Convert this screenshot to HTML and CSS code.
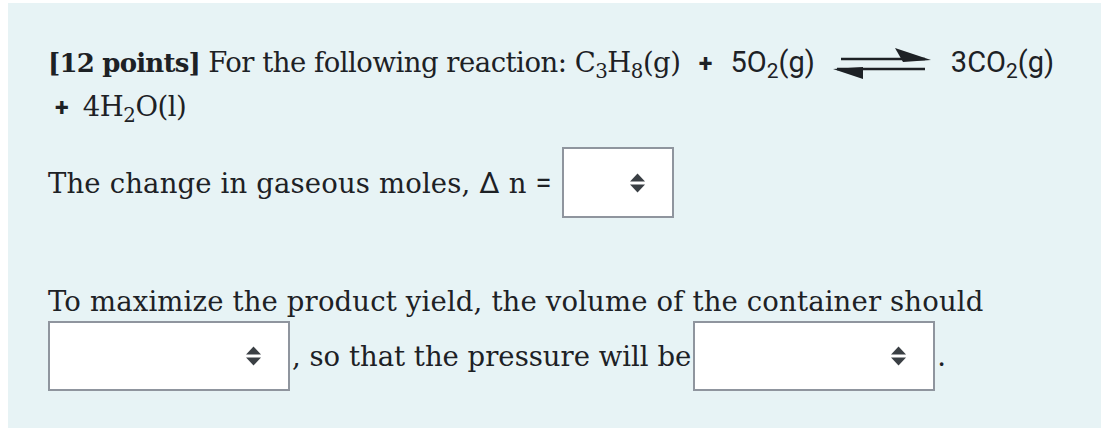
FILE: index.html
```html
<!DOCTYPE html>
<html>
<head>
<meta charset="utf-8">
<link rel="stylesheet" href="styles.css">
</head>
<body>
<div class="que">
  <p class="reaction"><b>[12 points]</b> For the following reaction: C<sub>3</sub>H<sub>8</sub>(g) <span class="plus">+</span> <span class="sans">5O<sub>2</sub>(g)</span><svg class="eq" width="100" height="36" viewBox="0 0 100 36"><line x1="8" y1="14" x2="92" y2="14" stroke="#1d2125" stroke-width="2.4"/><polygon points="62,3 98,15 70,17" fill="#1d2125"/><line x1="4" y1="24" x2="92" y2="24" stroke="#1d2125" stroke-width="2.4"/><polygon points="0,24 30,22 30,34" fill="#1d2125"/></svg><span class="sans">3CO<sub>2</sub>(g)</span><br><span class="lead"><span class="plus">+</span></span> 4H<sub>2</sub>O(l)</p>

  <div class="row row-dn">
    <span class="txt">The change in gaseous moles, <span class="sans">Δ</span> n <span class="sans">=</span></span>
    <span class="select sm"><svg class="updown" width="15" height="20" viewBox="0 0 15 20"><polygon points="0,8.5 7.5,0.5 15,8.5" fill="#3a3f44"/><polygon points="0,11.5 7.5,19.5 15,11.5" fill="#3a3f44"/></svg></span>
  </div>

  <p class="txt yield">To maximize the product yield, the volume of the container should</p>
  <div class="row row-vol">
    <span class="select lg"><svg class="updown" width="15" height="20" viewBox="0 0 15 20"><polygon points="0,8.5 7.5,0.5 15,8.5" fill="#3a3f44"/><polygon points="0,11.5 7.5,19.5 15,11.5" fill="#3a3f44"/></svg></span>
    <span class="txt mid">, so that the pressure will be</span>
    <span class="select lg"><svg class="updown" width="15" height="20" viewBox="0 0 15 20"><polygon points="0,8.5 7.5,0.5 15,8.5" fill="#3a3f44"/><polygon points="0,11.5 7.5,19.5 15,11.5" fill="#3a3f44"/></svg></span>
    <span class="txt end">.</span>
  </div>
</div>
</body>
</html>
```

FILE: styles.css
```css
html, body {
  margin: 0;
  padding: 0;
  background: #ffffff;
}

.que {
  margin: 3px 0 0 8px;
  width: 1093px;
  height: 425px;
  background: #e7f3f5;
  padding: 38px 0 0 40px;
  box-sizing: border-box;
  color: #1d2125;
  font-family: "DejaVu Serif", "Liberation Serif", serif;
  font-size: 27.5px;
  letter-spacing: 0.15px;
  line-height: 42px;
}

p {
  margin: 0;
}

.reaction {
  letter-spacing: -0.5px;
}

b {
  font-weight: bold;
  font-size: 26px;
  letter-spacing: -0.8px;
}

sub {
  font-size: 0.72em;
  line-height: 0;
  vertical-align: -0.28em;
}

.sans {
  font-family: Roboto, "Liberation Sans", sans-serif;
  font-size: 29px;
  letter-spacing: 0;
}

.plus {
  font-family: Roboto, "Liberation Sans", sans-serif;
  font-weight: bold;
  font-size: 25px;
  letter-spacing: 0;
  margin: 0 10px;
}

.lead .plus {
  margin: 0 6px 0 7px;
}

.eq {
  vertical-align: -9px;
  margin: 0 18px 0 18px;
}

.row {
  display: flex;
  align-items: center;
}

.row-dn {
  margin-top: 18px;
  gap: 11px;
}

.yield {
  margin-top: 62px;
}

.row-vol {
  margin-top: -1px;
}

.row-vol .mid {
  letter-spacing: 0;
  margin: 0 2px 0 2px;
}

.row-vol .end {
  margin-left: 2px;
}

.select {
  display: flex;
  align-items: center;
  justify-content: flex-end;
  background: #ffffff;
  border: 2px solid #8f959e;
  box-sizing: border-box;
  padding-right: 27px;
}

.select.sm {
  width: 112px;
  height: 71px;
}

.select.lg {
  width: 242px;
  height: 70px;
}

.updown {
  display: block;
}
```
